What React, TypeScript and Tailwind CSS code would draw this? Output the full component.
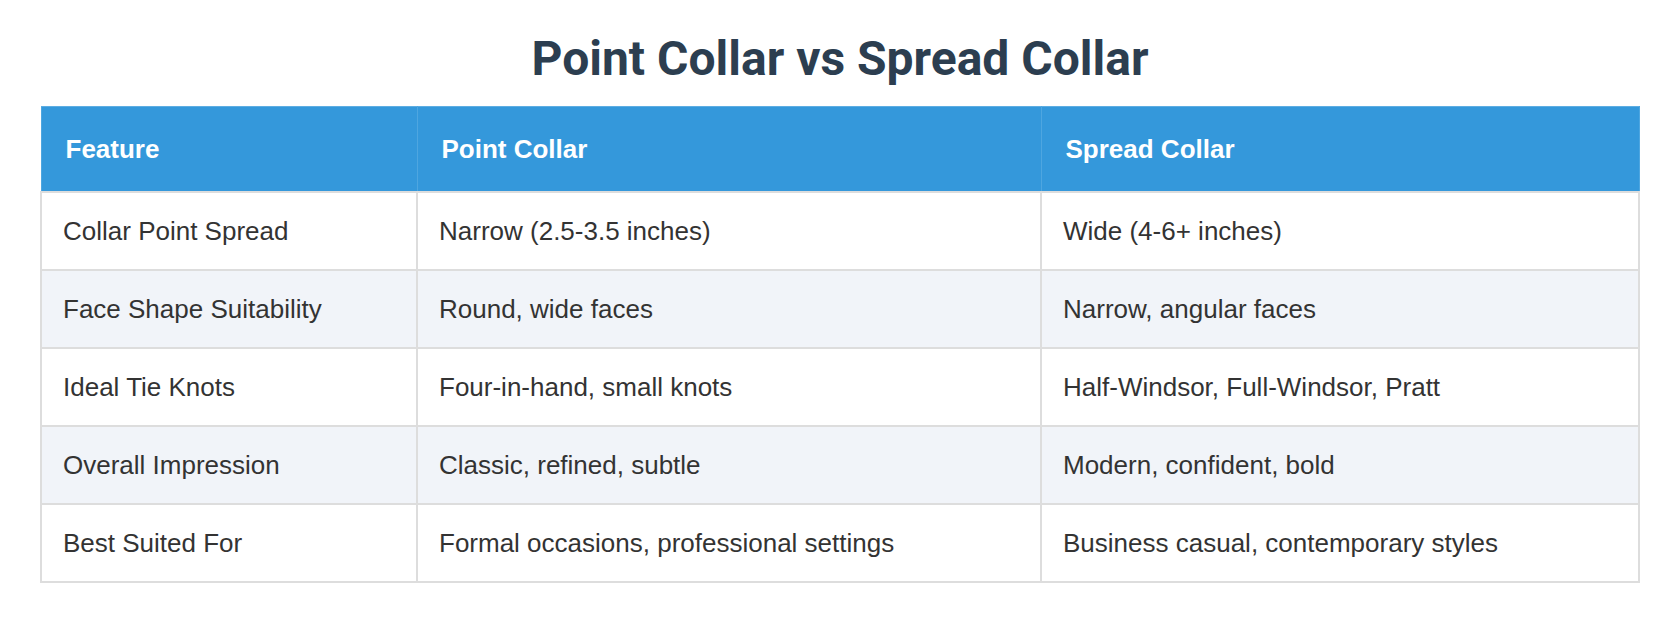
import React from "react";

const rows: [string, string, string][] = [
  ["Collar Point Spread", "Narrow (2.5-3.5 inches)", "Wide (4-6+ inches)"],
  ["Face Shape Suitability", "Round, wide faces", "Narrow, angular faces"],
  ["Ideal Tie Knots", "Four-in-hand, small knots", "Half-Windsor, Full-Windsor, Pratt"],
  ["Overall Impression", "Classic, refined, subtle", "Modern, confident, bold"],
  ["Best Suited For", "Formal occasions, professional settings", "Business casual, contemporary styles"],
];

export default function App() {
  return (
    <div className="w-full min-h-[626px] bg-white px-[40px] pt-[31px]">
      <h1 className="text-center text-[48px] font-bold text-[#2c3e50] leading-[56px] mb-[19px] font-['Roboto',sans-serif]">
        Point Collar vs Spread Collar
      </h1>
      <table className="w-full table-fixed border-collapse font-['Liberation_Sans',Arial,sans-serif] text-[26px] leading-[30px]">
        <colgroup>
          <col className="w-[376px]" />
          <col className="w-[624px]" />
          <col />
        </colgroup>
        <thead>
          <tr className="bg-[#3498db]">
            <th className="text-left font-bold text-white px-[24px] py-[27px] border-t border-t-[#5dade2] border-x border-x-[#4ea6e0] border-b-2 border-b-[#dddddd]">
              Feature
            </th>
            <th className="text-left font-bold text-white px-[24px] py-[27px] border-t border-t-[#5dade2] border-x border-x-[#4ea6e0] border-b-2 border-b-[#dddddd]">
              Point Collar
            </th>
            <th className="text-left font-bold text-white px-[24px] py-[27px] border-t border-t-[#5dade2] border-x border-x-[#4ea6e0] border-b-2 border-b-[#dddddd]">
              Spread Collar
            </th>
          </tr>
        </thead>
        <tbody>
          {rows.map((r, i) => (
            <tr key={i} className={i % 2 === 1 ? "bg-[#f1f4f9]" : "bg-white"}>
              {r.map((c, j) => (
                <td
                  key={j}
                  className="text-left text-[#333333] px-[21px] py-[23px] border-2 border-[#dddddd]"
                >
                  {c}
                </td>
              ))}
            </tr>
          ))}
        </tbody>
      </table>
    </div>
  );
}
